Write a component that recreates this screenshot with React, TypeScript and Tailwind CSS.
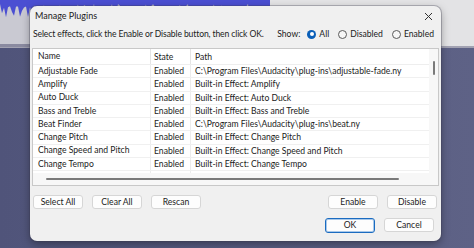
import React from "react";

type Row = { name: string; state: string; path: string };

const ROWS: Row[] = [
  { name: "Adjustable Fade", state: "Enabled", path: "C:\\Program Files\\Audacity\\plug-ins\\adjustable-fade.ny" },
  { name: "Amplify", state: "Enabled", path: "Built-in Effect: Amplify" },
  { name: "Auto Duck", state: "Enabled", path: "Built-in Effect: Auto Duck" },
  { name: "Bass and Treble", state: "Enabled", path: "Built-in Effect: Bass and Treble" },
  { name: "Beat Finder", state: "Enabled", path: "C:\\Program Files\\Audacity\\plug-ins\\beat.ny" },
  { name: "Change Pitch", state: "Enabled", path: "Built-in Effect: Change Pitch" },
  { name: "Change Speed and Pitch", state: "Enabled", path: "Built-in Effect: Change Speed and Pitch" },
  { name: "Change Tempo", state: "Enabled", path: "Built-in Effect: Change Tempo" },
  { name: "Chirp", state: "Enabled", path: "Built-in Effect: Chirp" },
];

function Radio({ label, checked }: { label: string; checked?: boolean }) {
  return (
    <div className="flex items-center gap-[3px]">
      {checked ? (
        <span className="flex h-[9px] w-[9px] items-center justify-center rounded-full bg-[#0a5fb8]">
          <span className="h-[4px] w-[4px] rounded-full bg-white" />
        </span>
      ) : (
        <span className="h-[9px] w-[9px] rounded-full border border-[#5a5a5a] bg-[#f6f6f6]" />
      )}
      <span>{label}</span>
    </div>
  );
}

function Btn({ label, primary }: { label: string; primary?: boolean }) {
  return (
    <div
      className={
        primary
          ? "flex h-[15px] w-[50px] items-center justify-center rounded-[3px] border border-[#1a6bc0] bg-[#fdfdfd] shadow-[inset_0_0_0_1px_#a8c8ea]"
          : "flex h-[14px] w-[50px] items-center justify-center rounded-[3px] border border-[#d6d6d6] bg-[#fdfdfd]"
      }
    >
      {label}
    </div>
  );
}

function Waveform() {
  const pts: string[] = [];
  for (let i = 0; i <= 270; i += 2) {
    const h = 4 + Math.abs(Math.sin(i * 0.37) * 9 + Math.sin(i * 1.3) * 6);
    pts.push(`${i},${h.toFixed(1)}`);
  }
  return (
    <svg width="270" height="47" className="absolute left-0 top-0">
      <rect x="0" y="0" width="270" height="47" fill="#c9c9d2" />
      <polygon points={`0,0 ${pts.join(" ")} 270,0`} fill="#4b4fd2" />
      <rect x="0" y="44" width="270" height="3" fill="#8a8aa0" />
    </svg>
  );
}

export default function App() {
  return (
    <div
      className="relative h-[248px] w-[474px] overflow-hidden bg-gradient-to-r from-[#50547a] to-[#5e6286] text-[8.6px] text-[#1b1b1b]"
      style={{ fontFamily: 'Lato, "Noto Sans", Arial, sans-serif' }}
    >
      <div className="absolute left-0 top-0 h-[47px] w-[474px] bg-[#e3e3e5]" />
      <div className="absolute left-0 top-[46px] h-[2px] w-[474px] bg-[#a2a2b2]" />
      <Waveform />

      {/* dialog window */}
      <div className="absolute left-[30px] top-[6px] flex h-[235px] w-[411px] flex-col rounded-[7px] bg-[#f0f0f0] shadow-[0_0_0_1px_rgba(60,60,80,0.3),0_3px_8px_rgba(0,0,0,0.35)]">
        <div className="flex h-[20px] items-center justify-between pl-[5px] pr-[8px]">
          <span className="text-[9px]">Manage Plugins</span>
          <svg width="9" height="9" viewBox="0 0 9 9">
            <path d="M1 1 L8 8 M8 1 L1 8" stroke="#333" strokeWidth="1" />
          </svg>
        </div>

        <div className="flex h-[17px] items-center justify-between pl-[3px] pr-[7px]">
          <span className="tracking-[-0.12px]">Select effects, click the Enable or Disable button, then click OK.</span>
          <div className="flex items-center gap-[9px]">
            <span className="mr-[-2px]">Show:</span>
            <Radio label="All" checked />
            <Radio label="Disabled" />
            <Radio label="Enabled" />
          </div>
        </div>

        <div className="relative mx-[2px] mt-[5px] h-[138px] overflow-hidden border border-[#c8c8c8] bg-white">
          <div className="flex h-[16px] items-center border-b border-[#eeeeee]">
            <div className="w-[117px] pl-[5px]">Name</div>
            <div className="h-full w-[40px] border-l border-[#e4e4e4] pl-[3px] leading-[16px]">State</div>
            <div className="h-full flex-1 border-l border-[#e4e4e4] pl-[4px] leading-[16px]">Path</div>
          </div>
          {ROWS.map((r, i) => (
            <div key={i} className="flex h-[13.3px] items-center border-b border-[#f0f0f0]">
              <div className="w-[117px] whitespace-nowrap pl-[5px]">{r.name}</div>
              <div className="h-full w-[40px] border-l border-[#ececec] pl-[3px] leading-[13px]">{r.state}</div>
              <div className="h-full flex-1 whitespace-nowrap border-l border-[#ececec] pl-[4px] leading-[13px]">{r.path}</div>
            </div>
          ))}
          <div className="absolute bottom-0 left-0 right-0 flex h-[12px] items-center bg-[#f7f7f7]">
            <div className="ml-[13px] h-[2px] w-[353px] rounded-full bg-[#7a7a7a]" />
          </div>
          <div className="absolute right-0 top-0 flex h-[126px] w-[9px] justify-center bg-[#f7f7f7] pt-[12px]">
            <div className="h-[14px] w-[2px] rounded-full bg-[#7a7a7a]" />
          </div>
        </div>

        <div className="mt-[9px] flex items-center justify-between px-[3px]">
          <div className="flex gap-[9px]">
            <Btn label="Select All" />
            <Btn label="Clear All" />
            <Btn label="Rescan" />
          </div>
          <div className="flex gap-[9px] pr-[1px]">
            <Btn label="Enable" />
            <Btn label="Disable" />
          </div>
        </div>

        <div className="mt-[9px] flex justify-end gap-[9px] pr-[7px]">
          <Btn label="OK" primary />
          <Btn label="Cancel" />
        </div>
      </div>
    </div>
  );
}
